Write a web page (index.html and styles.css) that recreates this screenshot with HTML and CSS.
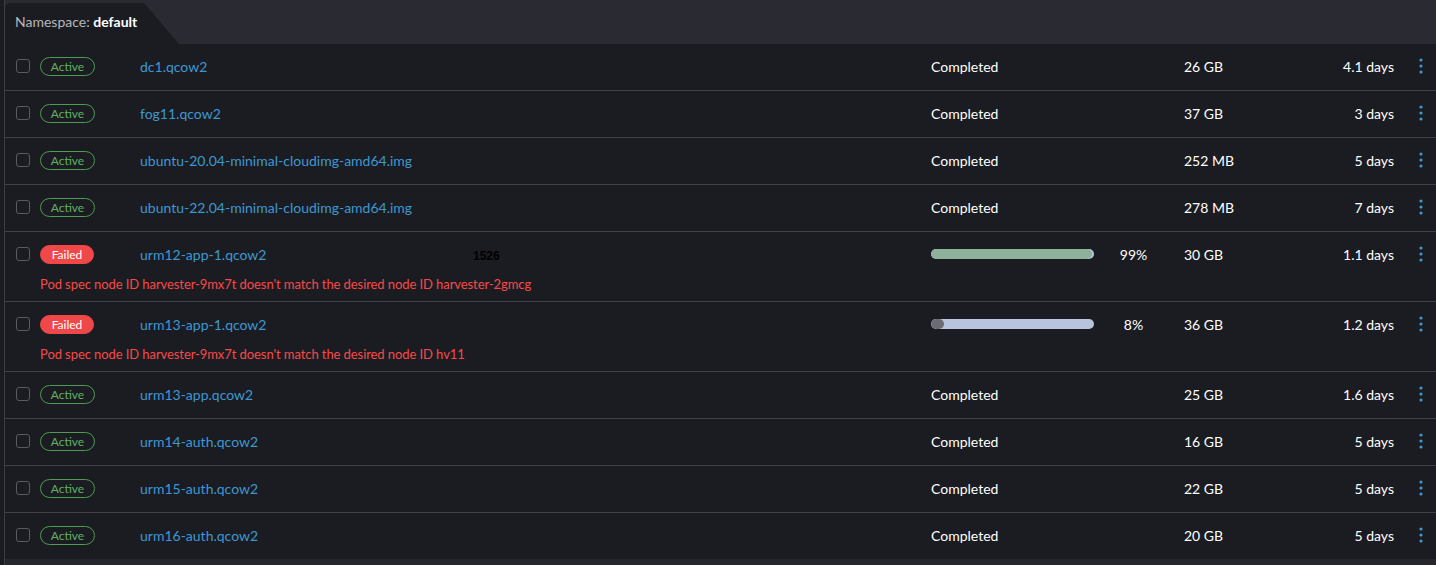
FILE: index.html
```html
<!DOCTYPE html>
<html>
<head>
<meta charset="utf-8">
<link rel="stylesheet" href="styles.css">
</head>
<body>
<div class="page">
  <div class="table">
    <div class="group-head">
      <div class="tab"><span class="ns-label">Namespace:</span> <span class="ns-value">default</span></div>
    </div>

    <div class="row">
      <div class="line">
        <div class="c-cb"><span class="cb"></span></div>
        <div class="c-badge"><span class="badge active">Active</span></div>
        <div class="c-name"><a class="link">dc1.qcow2</a></div>
        <div class="c-extra"></div>
        <div class="c-status">Completed</div>
        <div class="c-pct"></div>
        <div class="c-size">26 GB</div>
        <div class="c-age">4.1 days</div>
        <div class="c-menu"><svg class="kebab" width="4" height="16" viewBox="0 0 4 16"><circle cx="2" cy="2" r="1.6"/><circle cx="2" cy="8" r="1.6"/><circle cx="2" cy="14" r="1.6"/></svg></div>
      </div>
    </div>

    <div class="row">
      <div class="line">
        <div class="c-cb"><span class="cb"></span></div>
        <div class="c-badge"><span class="badge active">Active</span></div>
        <div class="c-name"><a class="link">fog11.qcow2</a></div>
        <div class="c-extra"></div>
        <div class="c-status">Completed</div>
        <div class="c-pct"></div>
        <div class="c-size">37 GB</div>
        <div class="c-age">3 days</div>
        <div class="c-menu"><svg class="kebab" width="4" height="16" viewBox="0 0 4 16"><circle cx="2" cy="2" r="1.6"/><circle cx="2" cy="8" r="1.6"/><circle cx="2" cy="14" r="1.6"/></svg></div>
      </div>
    </div>

    <div class="row">
      <div class="line">
        <div class="c-cb"><span class="cb"></span></div>
        <div class="c-badge"><span class="badge active">Active</span></div>
        <div class="c-name"><a class="link">ubuntu-20.04-minimal-cloudimg-amd64.img</a></div>
        <div class="c-extra"></div>
        <div class="c-status">Completed</div>
        <div class="c-pct"></div>
        <div class="c-size">252 MB</div>
        <div class="c-age">5 days</div>
        <div class="c-menu"><svg class="kebab" width="4" height="16" viewBox="0 0 4 16"><circle cx="2" cy="2" r="1.6"/><circle cx="2" cy="8" r="1.6"/><circle cx="2" cy="14" r="1.6"/></svg></div>
      </div>
    </div>

    <div class="row">
      <div class="line">
        <div class="c-cb"><span class="cb"></span></div>
        <div class="c-badge"><span class="badge active">Active</span></div>
        <div class="c-name"><a class="link">ubuntu-22.04-minimal-cloudimg-amd64.img</a></div>
        <div class="c-extra"></div>
        <div class="c-status">Completed</div>
        <div class="c-pct"></div>
        <div class="c-size">278 MB</div>
        <div class="c-age">7 days</div>
        <div class="c-menu"><svg class="kebab" width="4" height="16" viewBox="0 0 4 16"><circle cx="2" cy="2" r="1.6"/><circle cx="2" cy="8" r="1.6"/><circle cx="2" cy="14" r="1.6"/></svg></div>
      </div>
    </div>

    <div class="row failed-row">
      <div class="line">
        <div class="c-cb"><span class="cb"></span></div>
        <div class="c-badge"><span class="badge failed">Failed</span></div>
        <div class="c-name"><a class="link">urm12-app-1.qcow2</a></div>
        <div class="c-extra"><span class="stray">1526</span></div>
        <div class="c-status"><div class="bar green"><div class="fill" style="width: 99%"></div></div></div>
        <div class="c-pct">99%</div>
        <div class="c-size">30 GB</div>
        <div class="c-age">1.1 days</div>
        <div class="c-menu"><svg class="kebab" width="4" height="16" viewBox="0 0 4 16"><circle cx="2" cy="2" r="1.6"/><circle cx="2" cy="8" r="1.6"/><circle cx="2" cy="14" r="1.6"/></svg></div>
      </div>
      <div class="error">Pod spec node ID harvester-9mx7t doesn't match the desired node ID harvester-2gmcg</div>
    </div>

    <div class="row failed-row">
      <div class="line">
        <div class="c-cb"><span class="cb"></span></div>
        <div class="c-badge"><span class="badge failed">Failed</span></div>
        <div class="c-name"><a class="link">urm13-app-1.qcow2</a></div>
        <div class="c-extra"></div>
        <div class="c-status"><div class="bar gray"><div class="fill" style="width: 8%"></div></div></div>
        <div class="c-pct">8%</div>
        <div class="c-size">36 GB</div>
        <div class="c-age">1.2 days</div>
        <div class="c-menu"><svg class="kebab" width="4" height="16" viewBox="0 0 4 16"><circle cx="2" cy="2" r="1.6"/><circle cx="2" cy="8" r="1.6"/><circle cx="2" cy="14" r="1.6"/></svg></div>
      </div>
      <div class="error">Pod spec node ID harvester-9mx7t doesn't match the desired node ID hv11</div>
    </div>

    <div class="row">
      <div class="line">
        <div class="c-cb"><span class="cb"></span></div>
        <div class="c-badge"><span class="badge active">Active</span></div>
        <div class="c-name"><a class="link">urm13-app.qcow2</a></div>
        <div class="c-extra"></div>
        <div class="c-status">Completed</div>
        <div class="c-pct"></div>
        <div class="c-size">25 GB</div>
        <div class="c-age">1.6 days</div>
        <div class="c-menu"><svg class="kebab" width="4" height="16" viewBox="0 0 4 16"><circle cx="2" cy="2" r="1.6"/><circle cx="2" cy="8" r="1.6"/><circle cx="2" cy="14" r="1.6"/></svg></div>
      </div>
    </div>

    <div class="row">
      <div class="line">
        <div class="c-cb"><span class="cb"></span></div>
        <div class="c-badge"><span class="badge active">Active</span></div>
        <div class="c-name"><a class="link">urm14-auth.qcow2</a></div>
        <div class="c-extra"></div>
        <div class="c-status">Completed</div>
        <div class="c-pct"></div>
        <div class="c-size">16 GB</div>
        <div class="c-age">5 days</div>
        <div class="c-menu"><svg class="kebab" width="4" height="16" viewBox="0 0 4 16"><circle cx="2" cy="2" r="1.6"/><circle cx="2" cy="8" r="1.6"/><circle cx="2" cy="14" r="1.6"/></svg></div>
      </div>
    </div>

    <div class="row">
      <div class="line">
        <div class="c-cb"><span class="cb"></span></div>
        <div class="c-badge"><span class="badge active">Active</span></div>
        <div class="c-name"><a class="link">urm15-auth.qcow2</a></div>
        <div class="c-extra"></div>
        <div class="c-status">Completed</div>
        <div class="c-pct"></div>
        <div class="c-size">22 GB</div>
        <div class="c-age">5 days</div>
        <div class="c-menu"><svg class="kebab" width="4" height="16" viewBox="0 0 4 16"><circle cx="2" cy="2" r="1.6"/><circle cx="2" cy="8" r="1.6"/><circle cx="2" cy="14" r="1.6"/></svg></div>
      </div>
    </div>

    <div class="row last">
      <div class="line">
        <div class="c-cb"><span class="cb"></span></div>
        <div class="c-badge"><span class="badge active">Active</span></div>
        <div class="c-name"><a class="link">urm16-auth.qcow2</a></div>
        <div class="c-extra"></div>
        <div class="c-status">Completed</div>
        <div class="c-pct"></div>
        <div class="c-size">20 GB</div>
        <div class="c-age">5 days</div>
        <div class="c-menu"><svg class="kebab" width="4" height="16" viewBox="0 0 4 16"><circle cx="2" cy="2" r="1.6"/><circle cx="2" cy="8" r="1.6"/><circle cx="2" cy="14" r="1.6"/></svg></div>
      </div>
    </div>

    <div class="table-foot"></div>
  </div>
</div>
</body>
</html>
```

FILE: styles.css
```css
html, body {
  margin: 0;
  padding: 0;
}

body {
  background: #1b1c21;
  font-family: Lato, "Open Sans", "Liberation Sans", sans-serif;
  font-size: 14px;
  color: #ffffff;
  width: 1436px;
  height: 565px;
  overflow: hidden;
}

.page {
  padding-left: 4px;
}

.table {
  border-left: 1px solid #3c3d44;
  background: #1b1c21;
}

.group-head {
  height: 44px;
  background: #2a2a33;
  padding-top: 3px;
  box-sizing: border-box;
}

.tab {
  width: 174px;
  height: 41px;
  background: #1b1c21;
  border-top-left-radius: 5px;
  clip-path: polygon(0 0, 139px 0, 174px 100%, 0 100%);
  box-sizing: border-box;
  padding-left: 10px;
  line-height: 38px;
  font-size: 14px;
}

.ns-label {
  color: #b6b7bd;
}

.ns-value {
  color: #ffffff;
  font-weight: 700;
}

.row {
  border-bottom: 1px solid #404148;
}

.row.last {
  border-bottom: none;
}

.line {
  display: grid;
  grid-template-columns: 35px 100px 333px 458px 169px 84px 116px 94px 42px;
  height: 46px;
  box-sizing: border-box;
  padding-bottom: 2px;
  align-items: center;
}

.c-cb {
  padding-left: 11px;
  display: flex;
  align-items: center;
}

.cb {
  display: block;
  width: 12px;
  height: 12px;
  border: 1px solid #5a5b62;
  border-radius: 3px;
}

.badge {
  display: inline-block;
  box-sizing: border-box;
  height: 19px;
  line-height: 17px;
  border-radius: 10px;
  font-size: 12px;
  text-align: center;
}

.badge.active {
  width: 55px;
  border: 1px solid #4e9a52;
  color: #5fb064;
}

.badge.failed {
  width: 54px;
  background: #f04848;
  border: 1px solid #f04848;
  color: #ffffff;
}

.link {
  color: #3d98d3;
  text-decoration: none;
}

.stray {
  font-family: "Liberation Sans", Arial, sans-serif;
  font-size: 12px;
  font-weight: 700;
  color: #000000;
}

.c-status {
  color: #ffffff;
}

.bar {
  width: 163px;
  height: 10px;
  border-radius: 5px;
  overflow: hidden;
  background: #b8c4dd;
}

.bar .fill {
  height: 100%;
  border-radius: 5px;
}

.bar.green .fill {
  background: #8eb19c;
}

.bar.gray .fill {
  background: #6b6c74;
}

.c-pct {
  width: 67px;
  text-align: center;
}

.c-age {
  text-align: right;
}

.c-menu {
  padding-left: 25px;
  display: flex;
  align-items: center;
}

.kebab {
  fill: #3d98d3;
}

.error {
  color: #f64a4a;
  font-size: 13px;
  line-height: 16px;
  margin-top: -2px;
  padding-bottom: 9px;
  padding-left: 35px;
  letter-spacing: -0.08px;
}

.table-foot {
  height: 8px;
  background: #26272d;
}
```
